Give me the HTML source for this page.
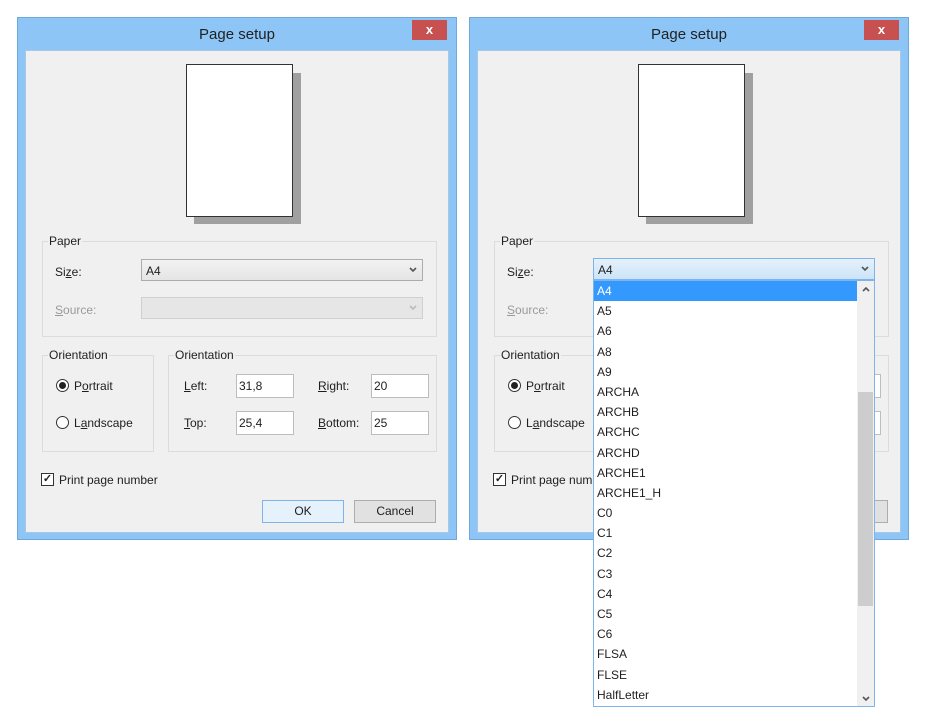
<!DOCTYPE html>
<html><head><meta charset="utf-8"><style>
*{box-sizing:border-box;margin:0;padding:0}
body{width:926px;height:725px;background:#fff;position:relative;overflow:hidden;font-family:"Liberation Sans",sans-serif;font-size:12px;color:#1e1e1e}
.a{position:absolute}
.dlg{position:absolute;top:17px;width:440px;height:523px;background:#8cc5f6;border:1px solid #6fa9dc}
.title{position:absolute;left:0;right:0;top:8px;text-align:center;font-size:15px;color:#222}
.close{position:absolute;right:9px;top:2px;width:35px;height:20px;background:#c75050;color:#fff;font-size:13px;text-align:center;line-height:19px;font-weight:bold}
.inner{position:absolute;left:7px;top:32px;width:424px;height:483px;background:#f0f0f0;border:1px solid #a9c8e6}
.grp{position:absolute;border:1px solid #dcdcdc}
.gl{position:absolute;background:#f0f0f0;padding:0 1px}
.combo{position:absolute;height:22px;border:1px solid #acacac;background:linear-gradient(#f2f2f2,#e5e5e5);padding:4px 0 0 4px}
.inp{position:absolute;width:58px;height:24px;border:1px solid #bdbdbd;background:#fff;padding:4px 0 0 2px}
.btn{position:absolute;width:82px;height:23px;border:1px solid #adadad;background:#e1e1e1;text-align:center;line-height:21px}
.rad{position:absolute;width:13px;height:13px;border:1px solid #333;border-radius:50%;background:#fff}
.chev{position:absolute;right:5px;top:7px}
.list div{height:20.2px;padding:3px 0 0 3px}
</style></head><body>
<svg width="0" height="0" style="position:absolute"><defs>
<symbol id="dn" viewBox="0 0 8 5"><path d="M1 1 L4 4 L7 1" fill="none" stroke="currentColor" stroke-width="1.6"/></symbol>
<symbol id="up" viewBox="0 0 8 5"><path d="M1 4 L4 1 L7 4" fill="none" stroke="currentColor" stroke-width="1.6"/></symbol>
</defs></svg>

<!-- dialog 1 -->
<div class="dlg" style="left:17px">
<div class="title">Page setup</div><div class="close">x</div>
<div class="inner">
 <div class="a" style="left:168px;top:22px;width:107px;height:151px;background:#a0a0a0"></div>
 <div class="a" style="left:160px;top:13px;width:107px;height:153px;background:#fff;border:1px solid #333"></div>
 <div class="grp" style="left:16px;top:190px;width:395px;height:96px"></div>
 <div class="gl" style="left:22px;top:183px">Paper</div>
 <div class="a" style="left:29px;top:214px">Si<u>z</u>e:</div>
 <div class="combo" style="left:115px;top:208px;width:282px">A4<svg class="chev" width="8" height="5" style="color:#555"><use href="#dn"/></svg></div>
 <div class="a" style="left:29px;top:252px;color:#9a9a9a"><u>S</u>ource:</div>
 <div class="combo" style="left:115px;top:246px;width:282px;background:#e6e6e6;border-color:#d0d0d0"><svg class="chev" width="8" height="5" style="color:#bbb"><use href="#dn"/></svg></div>
 <div class="grp" style="left:16px;top:304px;width:112px;height:97px"></div>
 <div class="gl" style="left:22px;top:297px">Orientation</div>
 <div class="rad" style="left:30px;top:328px"><div class="a" style="left:2px;top:2px;width:7px;height:7px;border-radius:50%;background:#222"></div></div>
 <div class="a" style="left:48px;top:328px">P<u>o</u>rtrait</div>
 <div class="rad" style="left:30px;top:365px"></div>
 <div class="a" style="left:48px;top:365px">L<u>a</u>ndscape</div>
 <div class="grp" style="left:142px;top:304px;width:269px;height:97px"></div>
 <div class="gl" style="left:148px;top:297px">Orientation</div>
 <div class="a" style="left:158px;top:328px"><u>L</u>eft:</div>
 <div class="inp" style="left:210px;top:323px">31,8</div>
 <div class="a" style="left:292px;top:328px"><u>R</u>ight:</div>
 <div class="inp" style="left:345px;top:323px">20</div>
 <div class="a" style="left:158px;top:365px"><u>T</u>op:</div>
 <div class="inp" style="left:210px;top:360px">25,4</div>
 <div class="a" style="left:292px;top:365px"><u>B</u>ottom:</div>
 <div class="inp" style="left:345px;top:360px">25</div>
 <div class="a" style="left:15px;top:422px;width:13px;height:13px;border:1px solid #333;background:#fff;font-size:11px;line-height:11px;text-align:center;font-weight:bold">✓</div>
 <div class="a" style="left:33px;top:422px">Print page number</div>
 <div class="btn" style="left:236px;top:449px;border-color:#7eb4ea;background:#e5f1fb">OK</div>
 <div class="btn" style="left:328px;top:449px">Cancel</div>
</div></div>

<!-- dialog 2 -->
<div class="dlg" style="left:469px">
<div class="title">Page setup</div><div class="close">x</div>
<div class="inner">
 <div class="a" style="left:168px;top:22px;width:107px;height:151px;background:#a0a0a0"></div>
 <div class="a" style="left:160px;top:13px;width:107px;height:153px;background:#fff;border:1px solid #333"></div>
 <div class="grp" style="left:16px;top:190px;width:395px;height:96px"></div>
 <div class="gl" style="left:22px;top:183px">Paper</div>
 <div class="a" style="left:29px;top:214px">Si<u>z</u>e:</div>
 <div class="a" style="left:29px;top:252px;color:#9a9a9a"><u>S</u>ource:</div>
 <div class="grp" style="left:16px;top:304px;width:112px;height:97px"></div>
 <div class="gl" style="left:22px;top:297px">Orientation</div>
 <div class="rad" style="left:30px;top:328px"><div class="a" style="left:2px;top:2px;width:7px;height:7px;border-radius:50%;background:#222"></div></div>
 <div class="a" style="left:48px;top:328px">P<u>o</u>rtrait</div>
 <div class="rad" style="left:30px;top:365px"></div>
 <div class="a" style="left:48px;top:365px">L<u>a</u>ndscape</div>
 <div class="grp" style="left:142px;top:304px;width:269px;height:97px"></div>
 <div class="inp" style="left:345px;top:323px"></div>
 <div class="inp" style="left:345px;top:360px"></div>
 <div class="a" style="left:15px;top:422px;width:13px;height:13px;border:1px solid #333;background:#fff;font-size:11px;line-height:11px;text-align:center;font-weight:bold">✓</div>
 <div class="a" style="left:33px;top:422px">Print page number</div>
 <div class="btn" style="left:328px;top:449px">Cancel</div>
</div></div>

<!-- open combo -->
<div class="combo" style="left:593px;top:258px;width:282px;background:linear-gradient(#e5f1fb,#cce4f7);border-color:#7eb4ea">A4<svg class="chev" width="8" height="5" style="color:#555"><use href="#dn"/></svg></div>
<div class="a list" style="left:593px;top:280px;width:282px;height:427px;background:#fff;border:1px solid #7eb4ea">
 <div style="background:#3399ff;color:#fff;width:263px">A4</div>
 <div>A5</div><div>A6</div><div>A8</div><div>A9</div><div>ARCHA</div><div>ARCHB</div><div>ARCHC</div><div>ARCHD</div><div>ARCHE1</div><div>ARCHE1_H</div><div>C0</div><div>C1</div><div>C2</div><div>C3</div><div>C4</div><div>C5</div><div>C6</div><div>FLSA</div><div>FLSE</div><div>HalfLetter</div>
 <div class="a" style="left:263px;top:0;width:17px;height:425px;background:#f0f0f0;padding:0">
  <div class="a" style="left:1px;top:111px;width:15px;height:214px;background:#cdcdcd;padding:0"></div>
  <svg class="a" style="left:5px;top:6px;color:#555" width="8" height="5"><use href="#up"/></svg>
  <svg class="a" style="left:5px;top:415px;color:#555" width="8" height="5"><use href="#dn"/></svg>
 </div>
</div>
</body></html>
